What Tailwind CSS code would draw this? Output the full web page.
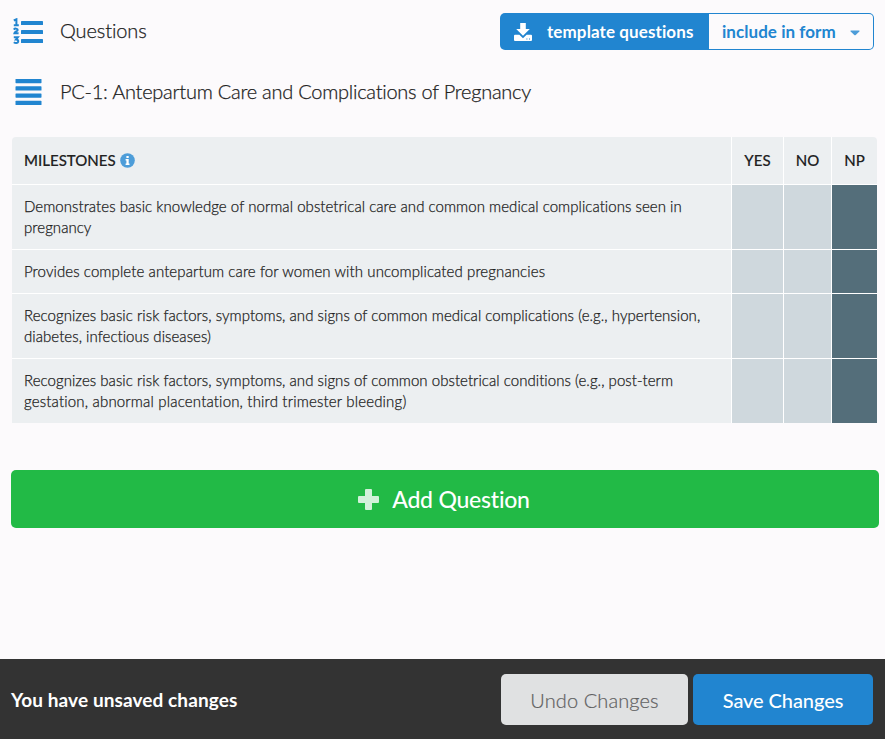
<!DOCTYPE html>
<html lang="en">
<head>
  <meta charset="UTF-8">
  <meta name="viewport" content="width=device-width, initial-scale=1.0">
  <title>Questions</title>
  <script src="https://cdn.jsdelivr.net/npm/@tailwindcss/browser@4"></script>
</head>
<body class="flex h-screen flex-col overflow-hidden bg-[#fcfafc] font-['Lato',sans-serif] text-[#212121] [font-variant-ligatures:none]">
  <main class="flex-1 pl-3 pr-2">
    <!-- Header -->
    <header class="flex h-[37px] mt-[13px] items-center pr-[3px]">
      <svg class="ml-[1px] h-[28px] w-[31px] text-[#2185d0]" viewBox="0 0 31 28" fill="currentColor" aria-hidden="true">
        <rect x="8" y="3" width="22" height="4" rx=".6" />
        <rect x="8" y="12" width="22" height="4" rx=".6" />
        <rect x="8" y="21" width="22" height="4" rx=".6" />
        <g fill="none" stroke="currentColor" stroke-width="2">
          <path d="M.8 2.500 3.400 1.300V7M.8 7.200h5" />
          <path d="M.8 11.600c1-1.500 3.900-1.200 3.900.3 0 1.300-3 1.800-3.300 3.300h4.200" />
          <path d="M.8 19.300h4L3 21.500c3 0 2.900 3.500.2 3.500-.9 0-1.700-.2-2.400-.7" />
        </g>
      </svg>
      <h1 class="-mt-[3px] ml-4 text-[20px] font-light leading-6 tracking-[-0.1px] text-[#212121] [-webkit-text-stroke:0.25px_#212121]">Questions</h1>
      <div class="ml-auto flex h-[37px] w-[374px] text-[17px] font-bold tracking-[0.1px]">
        <button class="z-10 flex w-[209px] shrink-0 items-center rounded-l-[5px] bg-[#2185d0] pl-[14px] text-white">
          <svg class="h-[18px] w-[18px]" viewBox="0 0 18 18" fill="currentColor" aria-hidden="true">
            <path d="M6.200 0h5.600v6h4L9 12.800 2.200 6h4z" />
            <path fill-rule="evenodd" d="M1 11.700h4.400L9 15.200l3.600-3.500H17q1 0 1 1V17q0 1-1 1H1q-1 0-1-1v-4.300q0-1 1-1zM12.400 15.400v1h1v-1zM15 15.400v1h1v-1z" />
          </svg>
          <span class="ml-[15px] whitespace-nowrap">template questions</span>
        </button>
        <button class="-ml-px flex flex-1 items-center rounded-r-[5px] pl-[14px] text-[#2185d0] shadow-[inset_0_0_0_1px_#2185d0]">
          <span class="whitespace-nowrap tracking-[0.05px]">include in form</span>
          <svg class="ml-[14px] mt-[2px] h-[6px] w-[10px] opacity-80" viewBox="0 0 10 6" fill="currentColor" aria-hidden="true"><path d="M1 .5h8q1 .2.300 1L5.700 5q-.7.600-1.400 0L.7 1.500Q0 .7 1 .5z" /></svg>
        </button>
      </div>
    </header>

    <!-- Question -->
    <section>
      <div class="mt-[24px] flex h-[36px] items-center">
        <svg class="ml-[3px] h-[26px] w-[27px] text-[#2185d0]" viewBox="0 0 27 26" fill="currentColor" aria-hidden="true">
          <rect x=".5" width="26" height="4.200" rx=".6" />
          <rect x=".5" y="7.300" width="26" height="4.200" rx=".6" />
          <rect x=".5" y="14.500" width="26" height="4.200" rx=".6" />
          <rect x=".5" y="21.800" width="26" height="4.200" rx=".6" />
        </svg>
        <h2 class="-mt-[2px] ml-[18px] text-[20px] font-light leading-6 tracking-[-0.25px] text-[#212121] [-webkit-text-stroke:0.25px_#212121]">PC-1: Antepartum Care and Complications of Pregnancy</h2>
      </div>

      <table class="mt-[27px] w-[865px] table-fixed border-separate border-spacing-0 overflow-hidden rounded-t-[4px] text-left text-[15px] leading-[21px]">
        <colgroup>
          <col class="w-[719px]">
          <col class="w-[52px]">
          <col class="w-[48px]">
          <col class="w-[46px]">
        </colgroup>
        <thead class="[-webkit-text-stroke:0.15px_#212121]">
          <tr class="h-[47px] bg-[#eceff1]">
            <th class="px-3 py-0 font-medium">
              <div class="flex items-center">
                MILESTONES
                <svg class="ml-[4px] h-[15px] w-[15px]" viewBox="0 0 15 15" aria-hidden="true">
                  <circle cx="7.500" cy="7.500" r="7.300" fill="#4d9dd9" />
                  <path d="M6.400 3h2.300v1.900H6.400zM5.600 6h3.100v4.400h.8v1.500H5.600v-1.500h.8V7.400h-.8z" fill="#fff" />
                </svg>
              </div>
            </th>
            <th class="border-l border-white p-0 text-center font-medium">YES</th>
            <th class="border-l border-white p-0 text-center font-medium">NO</th>
            <th class="border-l border-white p-0 text-center font-medium">NP</th>
          </tr>
        </thead>
        <tbody class="font-light tracking-[0.05px] [-webkit-text-stroke:0.25px_#212121]">
          <tr>
            <td class="border-t border-white bg-[#eceff1] px-3 py-[11px]">Demonstrates basic knowledge of normal obstetrical care and common medical complications seen in<br>pregnancy</td>
            <td class="border-l border-t border-white bg-[#cfd8dd]"></td>
            <td class="border-l border-t border-white bg-[#cfd8dd]"></td>
            <td class="border-l border-t border-white bg-[#546e7a]"></td>
          </tr>
          <tr>
            <td class="border-t border-white bg-[#eceff1] px-3 py-[11px] tracking-[0.1px]">Provides complete antepartum care for women with uncomplicated pregnancies</td>
            <td class="border-l border-t border-white bg-[#cfd8dd]"></td>
            <td class="border-l border-t border-white bg-[#cfd8dd]"></td>
            <td class="border-l border-t border-white bg-[#546e7a]"></td>
          </tr>
          <tr>
            <td class="border-t border-white bg-[#eceff1] px-3 py-[11px]">Recognizes basic risk factors, symptoms, and signs of common medical complications (e.g., hypertension,<br>diabetes, infectious diseases)</td>
            <td class="border-l border-t border-white bg-[#cfd8dd]"></td>
            <td class="border-l border-t border-white bg-[#cfd8dd]"></td>
            <td class="border-l border-t border-white bg-[#546e7a]"></td>
          </tr>
          <tr>
            <td class="border-t border-white bg-[#eceff1] px-3 py-[11px]">Recognizes basic risk factors, symptoms, and signs of common obstetrical conditions (e.g., post-term<br><span class="tracking-[0.18px]">gestation, abnormal placentation, third trimester bleeding)</span></td>
            <td class="border-l border-t border-white bg-[#cfd8dd]"></td>
            <td class="border-l border-t border-white bg-[#cfd8dd]"></td>
            <td class="border-l border-t border-white bg-[#546e7a]"></td>
          </tr>
        </tbody>
      </table>
    </section>

    <button class="-ml-px mt-[47px] flex h-[58px] w-[868px] items-center justify-center rounded-[5px] bg-[#22ba46] pr-[2px] text-[23px] font-medium tracking-[-0.01em] text-white">
      <svg class="mr-[13px] h-[21px] w-[21px] opacity-80" viewBox="0 0 21 21" fill="currentColor" aria-hidden="true">
        <path d="M8 0h5q1 0 1 1v6h6q1 0 1 1v5q0 1-1 1h-6v6q0 1-1 1H8q-1 0-1-1v-6H1q-1 0-1-1V8q0-1 1-1h6V1q0-1 1-1z" />
      </svg>
      Add Question
    </button>
  </main>

  <!-- Unsaved changes bar -->
  <footer class="flex h-[80px] items-center bg-[#333] pl-[11px] pr-3 text-[20px]">
    <p class="pt-[2px] text-[19px] font-bold tracking-[0.005em] text-white">You have unsaved changes</p>
    <button class="ml-auto h-[51px] w-[187px] rounded-[5px] bg-[#e0e1e2] pt-px font-light tracking-[0.1px] text-[#5f6061] [-webkit-text-stroke:0.2px_#5f6061]">Undo Changes</button>
    <button class="ml-[5px] h-[51px] w-[180px] rounded-[5px] bg-[#2185d0] pt-px font-medium tracking-[-0.08px] text-white">Save Changes</button>
  </footer>
</body>
</html>
